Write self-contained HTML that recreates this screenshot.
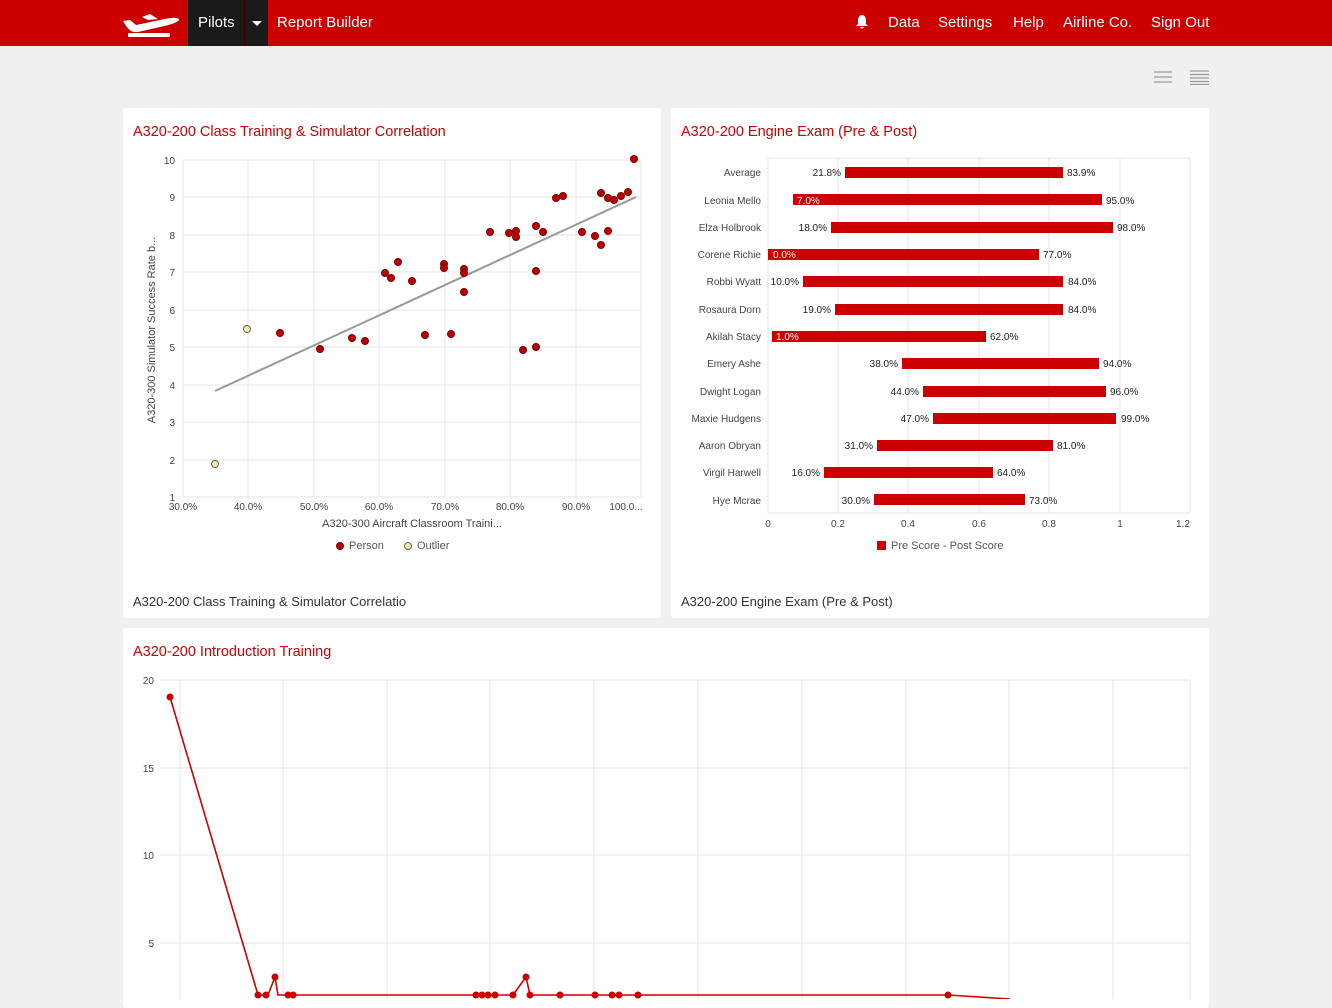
<!DOCTYPE html>
<html><head><meta charset="utf-8"><style>
*{margin:0;padding:0;box-sizing:border-box}
body{width:1332px;height:999px;overflow:hidden;background:#f0f0f0;font-family:"Liberation Sans",sans-serif;position:relative}
.hdr{position:absolute;left:0;top:0;width:1332px;height:46px;background:#cc0000;color:#fff;font-size:15px}
.hdr span{position:absolute;top:14px}
.card{position:absolute;background:#fff;border-radius:3px}
.t{position:absolute;color:#cc0000;font-size:14.5px}
.f{position:absolute;color:#333;font-size:13px}
svg text{font-family:"Liberation Sans",sans-serif}
</style></head><body>
<div class="hdr">
<svg style="position:absolute;left:120px;top:8px" width="62" height="30" viewBox="0 0 62 30"><path d="M3 13 L10 12 L16 17 L40 12 C48 10 56 9 59 11 C60 14 50 17 40 19 L18 24 C12 25 8 22 3 13Z M22 9 L30 6 L38 11 L28 12Z" fill="#fff"/><rect x="8" y="25" width="42" height="4" rx="1" fill="#fff"/></svg>
<div style="position:absolute;left:188px;top:0;width:80px;height:46px;background:#1a1a1a"></div>
<div style="position:absolute;left:244px;top:0;width:1px;height:46px;background:#3a0000"></div>
<span style="left:198px">Pilots</span>
<div style="position:absolute;left:252px;top:21px;width:0;height:0;border-left:5px solid transparent;border-right:5px solid transparent;border-top:5px solid #fff"></div>
<span style="left:277px">Report Builder</span>
<svg style="position:absolute;left:855px;top:14px" width="14" height="16" viewBox="0 0 14 16"><path d="M7 1 C4 1 3 4 3 7 L3 10 L1 12 L13 12 L11 10 L11 7 C11 4 10 1 7 1Z M5 13 L9 13 C9 15 5 15 5 13Z" fill="#fff"/></svg>
<span style="left:888px">Data</span><span style="left:938px">Settings</span><span style="left:1013px">Help</span><span style="left:1063px">Airline Co.</span><span style="left:1151px">Sign Out</span>
</div>
<svg style="position:absolute;left:1152px;top:69px" width="60" height="16"><g stroke="#999" stroke-width="1.3"><line x1="2" y1="3" x2="20" y2="3"/><line x1="2" y1="8" x2="20" y2="8"/><line x1="2" y1="13" x2="20" y2="13"/><line x1="38" y1="2" x2="57" y2="2"/><line x1="38" y1="5.5" x2="57" y2="5.5"/><line x1="38" y1="9" x2="57" y2="9"/><line x1="38" y1="12.5" x2="57" y2="12.5"/><line x1="38" y1="15.5" x2="57" y2="15.5"/></g></svg>

<div class="card" style="left:123px;top:108px;width:538px;height:510px"></div>
<div class="card" style="left:671px;top:108px;width:538px;height:510px"></div>
<div class="card" style="left:123px;top:628px;width:1086px;height:380px"></div>
<div class="t" style="left:133px;top:124px">A320-200 Class Training &amp; Simulator Correlation</div>
<div class="t" style="left:681px;top:124px">A320-200 Engine Exam (Pre &amp; Post)</div>
<div class="t" style="left:133px;top:644px">A320-200 Introduction Training</div>
<div class="f" style="left:133px;top:594px">A320-200 Class Training &amp; Simulator Correlatio</div>
<div class="f" style="left:681px;top:594px">A320-200 Engine Exam (Pre &amp; Post)</div>

<svg style="position:absolute;left:0;top:0" width="1332" height="999">
<g stroke="#e6e6e6" stroke-width="1">
<line x1="183" y1="160" x2="641" y2="160"/><line x1="183" y1="197" x2="641" y2="197"/><line x1="183" y1="235" x2="641" y2="235"/><line x1="183" y1="272" x2="641" y2="272"/><line x1="183" y1="310" x2="641" y2="310"/><line x1="183" y1="347" x2="641" y2="347"/><line x1="183" y1="385" x2="641" y2="385"/><line x1="183" y1="422" x2="641" y2="422"/><line x1="183" y1="460" x2="641" y2="460"/><line x1="183" y1="497" x2="641" y2="497"/>
<line x1="183" y1="160" x2="183" y2="497"/><line x1="248" y1="160" x2="248" y2="497"/><line x1="314" y1="160" x2="314" y2="497"/><line x1="379" y1="160" x2="379" y2="497"/><line x1="445" y1="160" x2="445" y2="497"/><line x1="510" y1="160" x2="510" y2="497"/><line x1="576" y1="160" x2="576" y2="497"/><line x1="641" y1="160" x2="641" y2="497"/>
</g>
<g font-size="10" fill="#444" text-anchor="end"><text x="175" y="164">10</text><text x="175" y="201">9</text><text x="175" y="239">8</text><text x="175" y="276">7</text><text x="175" y="314">6</text><text x="175" y="351">5</text><text x="175" y="389">4</text><text x="175" y="426">3</text><text x="175" y="464">2</text><text x="175" y="501">1</text></g>
<g font-size="10" fill="#444" text-anchor="middle"><text x="183" y="510">30.0%</text><text x="248" y="510">40.0%</text><text x="314" y="510">50.0%</text><text x="379" y="510">60.0%</text><text x="445" y="510">70.0%</text><text x="510" y="510">80.0%</text><text x="576" y="510">90.0%</text><text x="626" y="510">100.0...</text></g>
<text x="412" y="527" font-size="11" fill="#444" text-anchor="middle">A320-300 Aircraft Classroom Traini...</text>
<text transform="translate(155,330) rotate(-90)" font-size="11" fill="#444" text-anchor="middle">A320-300 Simulator Success Rate b...</text>
<line x1="215" y1="391" x2="636" y2="197" stroke="#999" stroke-width="2"/>
<g fill="#c00000" stroke="#700" stroke-width="1">
<circle cx="634" cy="159" r="3.5"/><circle cx="556" cy="198" r="3.5"/><circle cx="563" cy="196" r="3.5"/><circle cx="601" cy="193" r="3.5"/><circle cx="608" cy="198" r="3.5"/><circle cx="614" cy="200" r="3.5"/><circle cx="621" cy="196" r="3.5"/><circle cx="628" cy="192" r="3.5"/><circle cx="490" cy="232" r="3.5"/><circle cx="509" cy="233" r="3.5"/><circle cx="516" cy="231" r="3.5"/><circle cx="516" cy="237" r="3.5"/><circle cx="536" cy="226" r="3.5"/><circle cx="543" cy="232" r="3.5"/><circle cx="582" cy="232" r="3.5"/><circle cx="595" cy="236" r="3.5"/><circle cx="601" cy="245" r="3.5"/><circle cx="608" cy="231" r="3.5"/><circle cx="385" cy="273" r="3.5"/><circle cx="391" cy="278" r="3.5"/><circle cx="398" cy="262" r="3.5"/><circle cx="412" cy="281" r="3.5"/><circle cx="444" cy="264" r="3.5"/><circle cx="444" cy="268" r="3.5"/><circle cx="464" cy="269" r="3.5"/><circle cx="464" cy="273" r="3.5"/><circle cx="464" cy="292" r="3.5"/><circle cx="536" cy="271" r="3.5"/><circle cx="280" cy="333" r="3.5"/><circle cx="320" cy="349" r="3.5"/><circle cx="352" cy="338" r="3.5"/><circle cx="365" cy="341" r="3.5"/><circle cx="425" cy="335" r="3.5"/><circle cx="451" cy="334" r="3.5"/><circle cx="523" cy="350" r="3.5"/><circle cx="536" cy="347" r="3.5"/>
<circle cx="340" cy="546" r="3.5"/>
</g>
<g fill="#f3ecb0" stroke="#665" stroke-width="1"><circle cx="247" cy="329" r="3.5"/><circle cx="215" cy="464" r="3.5"/><circle cx="408" cy="546" r="3.5"/></g>
<g font-size="11" fill="#555"><text x="349" y="549">Person</text><text x="417" y="549">Outlier</text></g>

<!-- bar chart -->
<g stroke="#e6e6e6"><line x1="768" y1="158" x2="768" y2="513"/><line x1="838" y1="158" x2="838" y2="513"/><line x1="908" y1="158" x2="908" y2="513"/><line x1="979" y1="158" x2="979" y2="513"/><line x1="1049" y1="158" x2="1049" y2="513"/><line x1="1120" y1="158" x2="1120" y2="513"/><line x1="1190" y1="158" x2="1190" y2="513"/><line x1="768" y1="158" x2="1190" y2="158"/><line x1="768" y1="513" x2="1190" y2="513"/></g>
<g font-size="10" fill="#444" text-anchor="middle"><text x="768" y="527">0</text><text x="838" y="527">0.2</text><text x="908" y="527">0.4</text><text x="979" y="527">0.6</text><text x="1049" y="527">0.8</text><text x="1120" y="527">1</text><text x="1183" y="527">1.2</text></g>
<g fill="#cc0000">
<rect x="845" y="167" width="218" height="11"/><rect x="793" y="194" width="309" height="11"/><rect x="831" y="222" width="282" height="11"/><rect x="768" y="249" width="271" height="11"/><rect x="803" y="276" width="260" height="11"/><rect x="835" y="304" width="228" height="11"/><rect x="772" y="331" width="214" height="11"/><rect x="902" y="358" width="197" height="11"/><rect x="923" y="386" width="183" height="11"/><rect x="933" y="413" width="183" height="11"/><rect x="877" y="440" width="176" height="11"/><rect x="824" y="467" width="169" height="11"/><rect x="874" y="494" width="151" height="11"/>
<rect x="877" y="541" width="9" height="9"/>
</g>
<g font-size="10" fill="#444" text-anchor="end">
<text x="761" y="176">Average</text><text x="761" y="204">Leonia Mello</text><text x="761" y="231">Elza Holbrook</text><text x="761" y="258">Corene Richie</text><text x="761" y="285">Robbi Wyatt</text><text x="761" y="313">Rosaura Dorn</text><text x="761" y="340">Akilah Stacy</text><text x="761" y="367">Emery Ashe</text><text x="761" y="395">Dwight Logan</text><text x="761" y="422">Maxie Hudgens</text><text x="761" y="449">Aaron Obryan</text><text x="761" y="476">Virgil Harwell</text><text x="761" y="504">Hye Mcrae</text>
</g>
<g font-size="10" fill="#222" text-anchor="end"><text x="841" y="176">21.8%</text><text x="827" y="231">18.0%</text><text x="799" y="285">10.0%</text><text x="831" y="313">19.0%</text><text x="898" y="367">38.0%</text><text x="919" y="395">44.0%</text><text x="929" y="422">47.0%</text><text x="873" y="449">31.0%</text><text x="820" y="476">16.0%</text><text x="870" y="504">30.0%</text></g>
<g font-size="10" fill="#fff"><text x="797" y="204">7.0%</text><text x="773" y="258">0.0%</text><text x="776" y="340">1.0%</text></g>
<g font-size="10" fill="#222"><text x="1067" y="176">83.9%</text><text x="1106" y="204">95.0%</text><text x="1117" y="231">98.0%</text><text x="1043" y="258">77.0%</text><text x="1068" y="285">84.0%</text><text x="1068" y="313">84.0%</text><text x="990" y="340">62.0%</text><text x="1103" y="367">94.0%</text><text x="1110" y="395">96.0%</text><text x="1121" y="422">99.0%</text><text x="1057" y="449">81.0%</text><text x="997" y="476">64.0%</text><text x="1029" y="504">73.0%</text></g>
<text x="891" y="549" font-size="11" fill="#555">Pre Score - Post Score</text>

<!-- line chart -->
<g stroke="#e6e6e6"><line x1="160" y1="680" x2="1190" y2="680"/><line x1="160" y1="768" x2="1190" y2="768"/><line x1="160" y1="855" x2="1190" y2="855"/><line x1="160" y1="943" x2="1190" y2="943"/>
<line x1="180" y1="680" x2="180" y2="999"/><line x1="283" y1="680" x2="283" y2="999"/><line x1="387" y1="680" x2="387" y2="999"/><line x1="490" y1="680" x2="490" y2="999"/><line x1="594" y1="680" x2="594" y2="999"/><line x1="698" y1="680" x2="698" y2="999"/><line x1="802" y1="680" x2="802" y2="999"/><line x1="906" y1="680" x2="906" y2="999"/><line x1="1009" y1="680" x2="1009" y2="999"/><line x1="1113" y1="680" x2="1113" y2="999"/><line x1="1190" y1="680" x2="1190" y2="999"/></g>
<g font-size="10" fill="#444" text-anchor="end"><text x="154" y="684">20</text><text x="154" y="772">15</text><text x="154" y="859">10</text><text x="154" y="947">5</text></g>
<polyline fill="none" stroke="#cc0000" stroke-width="1.6" points="170,697 258,995 263,995 268,995 275,977 278,995 288,995 293,995 476,995 482,995 488,995 495,995 513,995 526,977 530,995 560,995 595,995 612,995 619,995 638,995 948,995 1010,999"/>
<g fill="#cc0000"><circle cx="170" cy="697" r="3.5"/><circle cx="258" cy="995" r="3.5"/><circle cx="266" cy="995" r="3.5"/><circle cx="275" cy="977" r="3.5"/><circle cx="288" cy="995" r="3.5"/><circle cx="293" cy="995" r="3.5"/><circle cx="476" cy="995" r="3.5"/><circle cx="482" cy="995" r="3.5"/><circle cx="488" cy="995" r="3.5"/><circle cx="495" cy="995" r="3.5"/><circle cx="513" cy="995" r="3.5"/><circle cx="526" cy="977" r="3.5"/><circle cx="530" cy="995" r="3.5"/><circle cx="560" cy="995" r="3.5"/><circle cx="595" cy="995" r="3.5"/><circle cx="612" cy="995" r="3.5"/><circle cx="619" cy="995" r="3.5"/><circle cx="638" cy="995" r="3.5"/><circle cx="948" cy="995" r="3.5"/></g>
</svg>
</body></html>
